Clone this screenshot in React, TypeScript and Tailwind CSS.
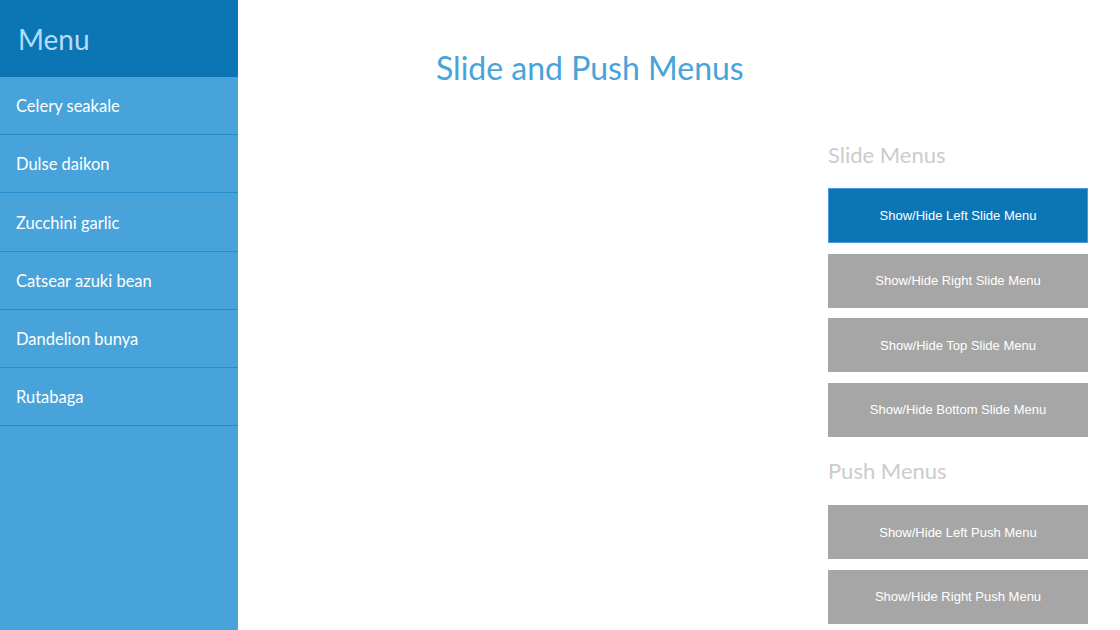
import React from "react";

const items = [
  "Celery seakale",
  "Dulse daikon",
  "Zucchini garlic",
  "Catsear azuki bean",
  "Dandelion bunya",
  "Rutabaga",
];

const slideBtns = [
  "Show/Hide Left Slide Menu",
  "Show/Hide Right Slide Menu",
  "Show/Hide Top Slide Menu",
  "Show/Hide Bottom Slide Menu",
];
const pushBtns = ["Show/Hide Left Push Menu", "Show/Hide Right Push Menu"];

const cal = { fontFamily: "Lato, 'Open Sans', sans-serif" };
const arial = { fontFamily: "'Liberation Sans', Arial, sans-serif" };

export default function App() {
  return (
    <div className="flex h-[630px] w-[1120px] overflow-hidden bg-white" style={cal}>
      <nav className="flex h-full w-[238px] shrink-0 flex-col bg-[#47a3da]">
        <h3 className="flex h-[77px] shrink-0 items-center bg-[#0c76b5] pl-[18px] text-[28px] font-normal text-[#afdefa]">
          Menu
        </h3>
        {items.map((t) => (
          <div
            key={t}
            className="flex h-[58.2px] shrink-0 items-center border-b border-[#258ecd] pl-4 pt-[2px] text-[16.5px] text-white"
          >
            {t}
          </div>
        ))}
      </nav>
      <main className="flex flex-1 flex-col">
        <h1 className="pl-[198px] pt-[48px] text-[32px] font-normal leading-[40px] text-[#47a3da]">
          Slide and Push Menus
        </h1>
        <div className="flex justify-end pr-[32px] pt-[54px]">
          <div className="flex w-[260px] flex-col">
            <h2 className="mb-[20px] h-[26px] text-[22px] leading-[26px] text-[#cccccc]">Slide Menus</h2>
            <div className="flex flex-col gap-[10.5px]">
              {slideBtns.map((b, i) => (
                <button
                  key={b}
                  className={
                    i === 0
                      ? "h-[55px] w-[260px] border border-[#4b95e6] bg-[#0c76b5] pt-[1px] text-[13px] text-white"
                      : "h-[54px] w-[260px] bg-[#a6a6a6] pt-[1px] text-[13px] text-white"
                  }
                  style={arial}
                >
                  {b}
                </button>
              ))}
            </div>
            <h2 className="mb-[21px] mt-[21.5px] h-[26px] text-[22px] leading-[26px] text-[#cccccc]">Push Menus</h2>
            <div className="flex flex-col gap-[10.5px]">
              {pushBtns.map((b) => (
                <button
                  key={b}
                  className="h-[54px] w-[260px] bg-[#a6a6a6] pt-[1px] text-[13px] text-white"
                  style={arial}
                >
                  {b}
                </button>
              ))}
            </div>
          </div>
        </div>
      </main>
    </div>
  );
}
